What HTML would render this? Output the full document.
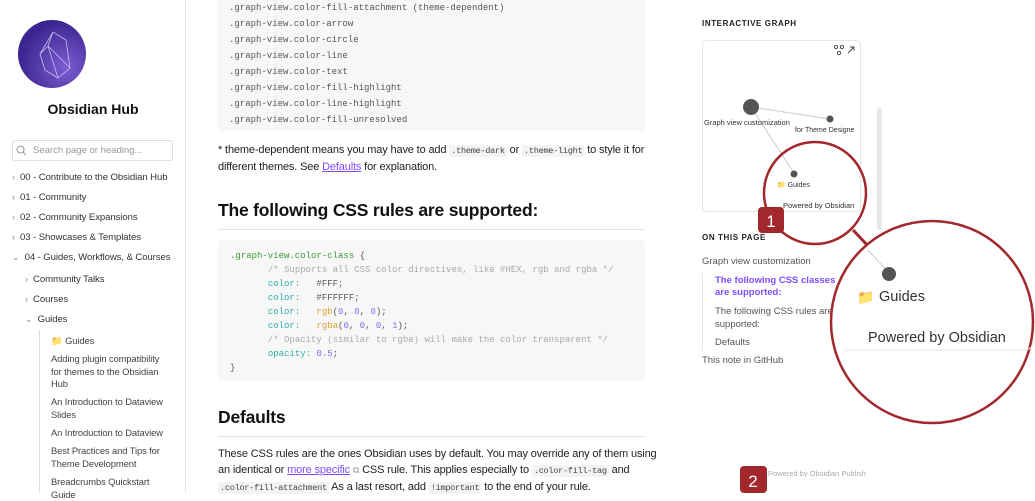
<!DOCTYPE html>
<html><head><meta charset="utf-8">
<style>
*{box-sizing:border-box;margin:0;padding:0}
body{width:1035px;height:493px;overflow:hidden;background:#fff;font-family:"Liberation Sans",sans-serif;color:#222;position:relative}
.abs{position:absolute}
.side{left:0;top:0;width:186px;height:493px;border-right:1px solid #e6e6e6}
.nav{font-size:9.6px;color:#333;white-space:nowrap;letter-spacing:-.1px}
.nav div{position:absolute}
.chev{color:#888;font-size:9px}
.mono{font-family:"Liberation Mono",monospace}
.code{left:218px;background:#f7f7f7;border-radius:4px}
.c{font-size:9px;color:#555;line-height:16px}
p.t{font-size:11px;line-height:16px;color:#222;letter-spacing:-.15px}
.ic{background:#f3f3f3;font-family:"Liberation Mono",monospace;font-size:8.6px;padding:1px 2px;color:#444;letter-spacing:-.3px}
h2{font-size:17.5px;font-weight:bold;color:#111;letter-spacing:-.2px}
.hr{height:1px;background:#e3e3e3;left:218px;width:427px}
.sd{font-size:9.4px;color:#444;line-height:12.5px;width:116px;letter-spacing:-.1px}
</style></head><body>
<div class="abs side">
 <div class="abs" style="left:18px;top:20px;width:68px;height:68px;border-radius:50%;background:radial-gradient(circle at 70% 70%,#7b5cd0,#3b2590 70%)"></div>
 <svg class="abs" style="left:18px;top:20px" width="68" height="68"><g stroke="#c8bff0" stroke-width=".8" fill="none"><path d="M22 34 L35 12 L48 20 L52 48 L40 58 L27 50 Z M35 12 L30 26 L40 58 M30 26 L52 48 M22 34 L30 26"/></g></svg>
 <div class="abs" style="left:0;width:186px;top:101px;text-align:center;font-weight:bold;font-size:14px;color:#111">Obsidian Hub</div>
 <div class="abs" style="left:12px;top:140px;width:161px;height:21px;border:1px solid #ddd;border-radius:3px;font-size:9.5px;color:#999;padding:4px 0 0 20px">Search page or heading...</div>
 <svg class="abs" style="left:16px;top:145px" width="11" height="11"><circle cx="4.5" cy="4.5" r="3.5" stroke="#999" fill="none"/><path d="M7 7L10 10" stroke="#999"/></svg>
 <div class="nav">
  <div style="left:12px;top:172px"><span class="chev">›</span>&nbsp; 00 - Contribute to the Obsidian Hub</div>
  <div style="left:12px;top:192px"><span class="chev">›</span>&nbsp; 01 - Community</div>
  <div style="left:12px;top:212px"><span class="chev">›</span>&nbsp; 02 - Community Expansions</div>
  <div style="left:12px;top:232px"><span class="chev">›</span>&nbsp; 03 - Showcases &amp; Templates</div>
  <div style="left:12px;top:252px"><span class="chev">⌄</span>&nbsp; 04 - Guides, Workflows, &amp; Courses</div>
  <div style="left:25px;top:274px"><span class="chev">›</span>&nbsp; Community Talks</div>
  <div style="left:25px;top:294px"><span class="chev">›</span>&nbsp; Courses</div>
  <div style="left:25px;top:314px"><span class="chev">⌄</span>&nbsp; Guides</div>
 </div>
 <div class="abs" style="left:39px;top:330px;width:1px;height:163px;background:#ddd"></div>
 <div class="abs sd" style="left:51px;top:335px">📁 Guides</div>
 <div class="abs sd" style="left:51px;top:353px">Adding plugin compatibility for themes to the Obsidian Hub</div>
 <div class="abs sd" style="left:51px;top:396px">An Introduction to Dataview Slides</div>
 <div class="abs sd" style="left:51px;top:427px">An Introduction to Dataview</div>
 <div class="abs sd" style="left:51px;top:445px">Best Practices and Tips for Theme Development</div>
 <div class="abs sd" style="left:51px;top:476px">Breadcrumbs Quickstart Guide</div>
</div>

<div class="abs code" style="top:-4px;width:427px;height:135px;padding:4px 0 0 11px">
<div class="mono c">.graph-view.color-fill-attachment (theme-dependent)<br>.graph-view.color-arrow<br>.graph-view.color-circle<br>.graph-view.color-line<br>.graph-view.color-text<br>.graph-view.color-fill-highlight<br>.graph-view.color-line-highlight<br>.graph-view.color-fill-unresolved</div>
</div>
<p class="t abs" style="left:218px;top:142px;width:432px">* theme-dependent means you may have to add <span class="ic">.theme-dark</span> or <span class="ic">.theme-light</span> to style it for different themes. See <span style="color:#7c4dff;text-decoration:underline">Defaults</span> for explanation.</p>
<h2 class="abs" style="left:218px;top:200px">The following CSS rules are supported:</h2>
<div class="abs hr" style="top:229px"></div>
<div class="abs code" style="top:240px;width:427px;height:141px;padding:9px 0 0 12px">
<div class="mono c" style="line-height:14px;white-space:pre"><span style="color:#3a9b3a">.graph-view.color-class</span> {
       <span style="color:#aaa">/* Supports all CSS color directives, like #HEX, rgb and rgba */</span>
       <span style="color:#2ab0a8">color:</span>   #FFF;
       <span style="color:#2ab0a8">color:</span>   #FFFFFF;
       <span style="color:#2ab0a8">color:</span>   <span style="color:#e0a030">rgb</span>(<span style="color:#8a6cf0">0</span>, <span style="color:#8a6cf0">0</span>, <span style="color:#8a6cf0">0</span>);
       <span style="color:#2ab0a8">color:</span>   <span style="color:#e0a030">rgba</span>(<span style="color:#8a6cf0">0</span>, <span style="color:#8a6cf0">0</span>, <span style="color:#8a6cf0">0</span>, <span style="color:#8a6cf0">1</span>);
       <span style="color:#aaa">/* Opacity (similar to rgba) will make the color transparent */</span>
       <span style="color:#2ab0a8">opacity:</span> <span style="color:#8a6cf0">0.5</span>;
}</div>
</div>
<h2 class="abs" style="left:218px;top:407px">Defaults</h2>
<div class="abs hr" style="top:436px"></div>
<p class="t abs" style="left:218px;top:446px;width:440px">These CSS rules are the ones Obsidian uses by default. You may override any of them using an identical or <span style="color:#7c4dff;text-decoration:underline">more specific</span> <span style="color:#999;font-size:9px">⧉</span> CSS rule. This applies especially to <span class="ic">.color-fill-tag</span> and <span class="ic">.color-fill-attachment</span> As a last resort, add <span class="ic">!important</span> to the end of your rule.</p>

<!-- right panel -->
<div class="abs" style="left:702px;top:19px;font-size:8px;font-weight:bold;letter-spacing:.6px;color:#222">INTERACTIVE GRAPH</div>
<div class="abs" style="left:702px;top:40px;width:159px;height:172px;border:1px solid #e5e5e5;border-radius:5px;overflow:hidden">
 <svg width="159" height="172" style="position:absolute;left:0;top:0">
  <line x1="48" y1="66" x2="127" y2="78" stroke="#ccc"/><line x1="48" y1="66" x2="91" y2="132" stroke="#ccc"/>
  <circle cx="48" cy="66" r="8" fill="#555"/><circle cx="127" cy="78" r="3.5" fill="#555"/><circle cx="91" cy="133" r="3.5" fill="#555"/>
  <text x="1" y="84" font-size="7.5" fill="#333" font-family="Liberation Sans">Graph view customization</text>
  <text x="92" y="91" font-size="7" fill="#333" font-family="Liberation Sans">for Theme Designe</text>
  <text x="74" y="146" font-size="7" fill="#333" font-family="Liberation Sans">📁 Guides</text>
  <text x="80" y="167" font-size="7.5" fill="#333" font-family="Liberation Sans">Powered by Obsidian</text>
  <g stroke="#444" fill="none" stroke-width=".9"><circle cx="133" cy="6" r="1.6"/><circle cx="139" cy="6" r="1.6"/><circle cx="136" cy="12" r="1.6"/><path d="M145 12L151 6M147 6h4v4"/></g>
 </svg>
</div>
<div class="abs" style="left:877px;top:108px;width:5px;height:122px;background:#e8e8e8;border-radius:3px"></div>
<div class="abs" style="left:702px;top:233px;font-size:8px;font-weight:bold;letter-spacing:.6px;color:#222">ON THIS PAGE</div>
<div class="abs" style="left:702px;top:256px;font-size:9.5px;color:#555">Graph view customization</div>
<div class="abs" style="left:702px;top:273px;width:1px;height:78px;background:#e5e5e5"></div>
<div class="abs" style="left:715px;top:275px;font-size:9.5px;color:#7c4dff;font-weight:bold;line-height:12px;width:130px">The following CSS classes are supported:</div>
<div class="abs" style="left:715px;top:305px;font-size:9.5px;color:#555;line-height:13px;width:120px">The following CSS rules are supported:</div>
<div class="abs" style="left:715px;top:337px;font-size:9.5px;color:#555">Defaults</div>
<div class="abs" style="left:702px;top:355px;font-size:9.5px;color:#555">This note in GitHub</div>
<div class="abs" style="left:768px;top:469px;font-size:7.5px;color:#aaa">Powered by Obsidian Publish</div>

<!-- magnifier -->
<svg class="abs" style="left:0;top:0" width="1035" height="493">
 <line x1="853" y1="230" x2="870" y2="248" stroke="#a2282c" stroke-width="3"/>
 <circle cx="815" cy="193" r="51" fill="none" stroke="#a2282c" stroke-width="2.5"/>
 <circle cx="932" cy="322" r="101" fill="#fff" stroke="#a2282c" stroke-width="2.5"/>
 <line x1="868" y1="250" x2="889" y2="273" stroke="#ccc"/>
 <circle cx="889" cy="274" r="7" fill="#555"/>
 <text x="857" y="302" font-size="14" font-family="Liberation Sans">📁</text>
 <text x="879" y="301" font-size="14.5" fill="#333" font-family="Liberation Sans">Guides</text>
 <text x="868" y="342" font-size="14.5" fill="#333" font-family="Liberation Sans">Powered by Obsidian</text>
 <path d="M845 350 H1025 a8 8 0 0 0 8 -8" stroke="#e5e5e5" fill="none"/>
 <rect x="758" y="207" width="26" height="26" rx="4" fill="#a2282c"/>
 <text x="771" y="227" font-size="17" fill="#fff" text-anchor="middle" font-family="Liberation Sans">1</text>
 <rect x="740" y="466" width="27" height="27" rx="4" fill="#a2282c"/>
 <text x="753" y="487" font-size="17" fill="#fff" text-anchor="middle" font-family="Liberation Sans">2</text>
</svg>
</body></html>
